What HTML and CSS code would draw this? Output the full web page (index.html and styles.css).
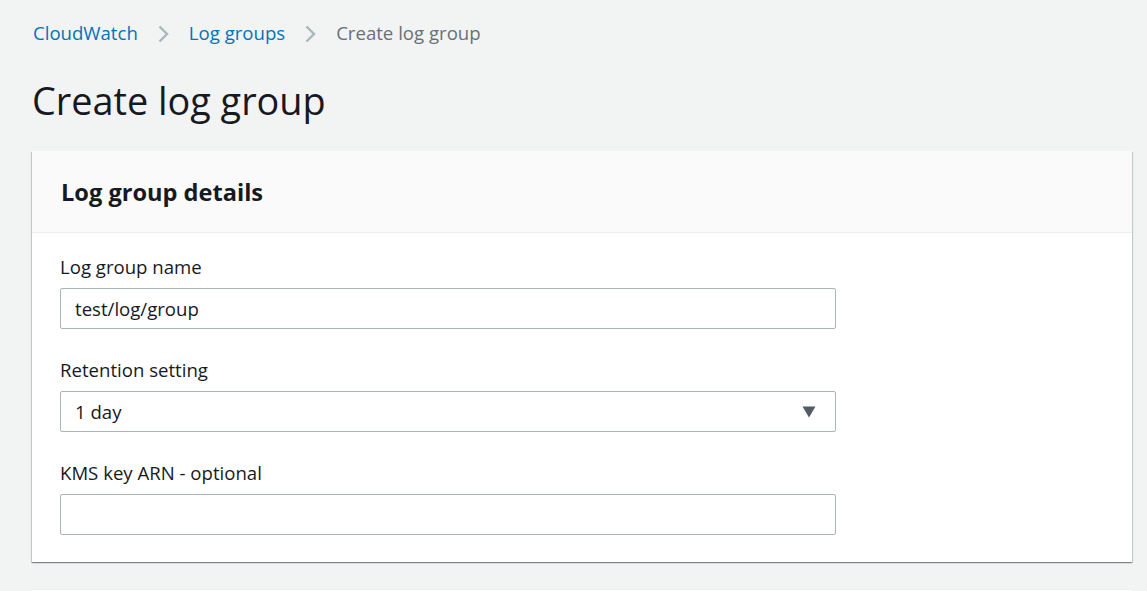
FILE: index.html
```html
<!DOCTYPE html>
<html lang="en">
<head>
<meta charset="utf-8">
<title>Create log group</title>
<link rel="stylesheet" href="styles.css">
</head>
<body>
<div class="page">
  <nav class="breadcrumbs">
    <a class="crumb-link" href="#">CloudWatch</a>
    <svg class="chevron" width="11" height="18" viewBox="0 0 11 18"><path d="M1.5 1.5 L9 9 L1.5 16.5" fill="none" stroke="#aab7b8" stroke-width="2.4"/></svg>
    <a class="crumb-link" href="#">Log groups</a>
    <svg class="chevron" width="11" height="18" viewBox="0 0 11 18"><path d="M1.5 1.5 L9 9 L1.5 16.5" fill="none" stroke="#aab7b8" stroke-width="2.4"/></svg>
    <span class="crumb-current">Create log group</span>
  </nav>
  <h1 class="page-title">Create log group</h1>
  <section class="card">
    <header class="card-header">
      <h2 class="card-title">Log group details</h2>
    </header>
    <div class="card-body">
      <div class="field">
        <label class="field-label">Log group name</label>
        <div class="input">test/log/group</div>
      </div>
      <div class="field">
        <label class="field-label">Retention setting</label>
        <div class="input select">
          <span>1 day</span>
          <svg class="caret" width="14" height="12" viewBox="0 0 14 12"><path d="M0.5 0.5 H13.5 L7 11.5 Z" fill="#545b64"/></svg>
        </div>
      </div>
      <div class="field">
        <label class="field-label">KMS key ARN - optional</label>
        <div class="input"></div>
      </div>
    </div>
  </section>
  <section class="card next-card"></section>
</div>
</body>
</html>
```

FILE: styles.css
```css
html, body {
  margin: 0;
  padding: 0;
}
body {
  background: #f2f3f3;
  font-family: "Open Sans", "Noto Sans", Arial, sans-serif;
  font-size: 18.6px;
  color: #16191f;
  overflow: hidden;
}
.page {
  padding: 21px 15px 0 32px;
}
.breadcrumbs {
  display: flex;
  align-items: center;
  gap: 20px;
  height: 24px;
  line-height: 24px;
  padding-left: 1px;
}
.crumb-link {
  color: #0073bb;
  text-decoration: none;
}
.crumb-current {
  color: #687078;
}
.chevron {
  display: block;
  margin-top: 2px;
}
.page-title {
  margin: 34px 0 0 0;
  font-size: 37.8px;
  line-height: 44px;
  font-weight: 400;
  color: #16191f;
}
.card {
  margin-top: 28px;
  background: #fff;
  box-shadow: 0 1px 1px 0 rgba(0, 28, 36, 0.3), 1px 1px 1px 0 rgba(0, 28, 36, 0.15), -1px 1px 1px 0 rgba(0, 28, 36, 0.15);
}
.card-header {
  background: #fafafa;
  border-bottom: 1px solid #eaeded;
  padding: 26px 28px 25px 29px;
}
.card-title {
  margin: 0;
  font-size: 23.6px;
  line-height: 30px;
  font-weight: 700;
}
.card-body {
  padding: 22px 28px 27px 28px;
  display: flex;
  flex-direction: column;
  gap: 29px;
}
.field-label {
  display: block;
  line-height: 24px;
  margin-bottom: 9px;
}
.input {
  box-sizing: border-box;
  width: 776px;
  height: 41px;
  border: 1px solid #aab7b8;
  border-radius: 2px;
  padding: 0 19px 0 14px;
  display: flex;
  align-items: center;
  line-height: 24px;
}
.select {
  justify-content: space-between;
}
.caret {
  display: block;
}
.next-card {
  margin-top: 27px;
  height: 40px;
  box-shadow: none;
  border-top: 1px solid #eaeded;
}
```
